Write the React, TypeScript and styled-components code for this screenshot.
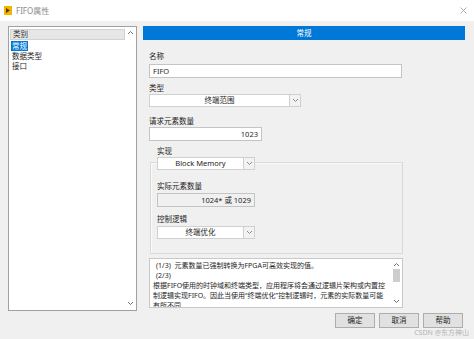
import React from 'react';
import styled, { createGlobalStyle } from 'styled-components';

const GlobalStyle = createGlobalStyle`
  html, body {
    margin: 0;
    padding: 0;
    background: #f0f0f0;
  }
`;

const Window = styled.div`
  position: relative;
  width: 474px;
  height: 339px;
  display: flex;
  flex-direction: column;
  overflow: hidden;
  background: #f0f0f0;
  color: #1e1e1e;
  font-family: 'Noto Sans', 'Noto Sans CJK SC', sans-serif;
  font-size: 7.5px;
`;

const TitleBar = styled.header`
  flex: none;
  height: 21px;
  display: flex;
  align-items: center;
  gap: 4px;
  padding: 0 7px 0 4px;
  background: #fff;
  box-sizing: border-box;
`;

const Title = styled.span`
  color: #8c8c8c;
  font-size: 8px;
  line-height: 10px;
`;

const CloseGlyph = styled.svg`
  margin-left: auto;
`;

const Body = styled.div`
  display: flex;
  gap: 6px;
  padding: 5px 8px 0;
`;

const CategoryList = styled.div`
  width: 129px;
  height: 285px;
  display: flex;
  box-sizing: border-box;
  background: #fff;
  border: 1px solid #a0a0a0;
`;

const ListItems = styled.div`
  flex: 1;
  display: flex;
  flex-direction: column;
  padding: 2px 0 0 1px;
`;

const ListHeader = styled.div`
  height: 9px;
  line-height: 9px;
  padding-left: 2px;
  margin-bottom: 1px;
  background: #e6e6e6;
  border: 1px solid #d2d2d2;
  color: #333;
`;

const ListItem = styled.div<{ $selected?: boolean }>`
  height: 10px;
  line-height: 10px;
  padding-left: 1px;

  span {
    padding: 0 1px;
    background: ${({ $selected }) => ($selected ? '#0078d7' : 'transparent')};
    color: ${({ $selected }) => ($selected ? '#fff' : '#1e1e1e')};
  }
`;

const ScrollTrack = styled.div<{ $bottom: number }>`
  width: 11px;
  display: flex;
  flex-direction: column;
  align-items: center;
  justify-content: space-between;
  padding: 3px 0 ${({ $bottom }) => $bottom}px;
`;

const ScrollThumb = styled.div`
  width: 7px;
  height: 13px;
  margin: 2px 0 auto;
  background: #cdcdcd;
`;

const MainPane = styled.div`
  width: 323px;
  display: flex;
  flex-direction: column;
`;

const SectionHeader = styled.div`
  height: 14px;
  margin-right: 1px;
  line-height: 14px;
  text-align: center;
  background: #0078d7;
  color: #fff;
`;

const Form = styled.div`
  display: flex;
  flex-direction: column;
  padding-left: 6px;
`;

const FieldLabel = styled.div<{ $gap: number }>`
  height: 9px;
  line-height: 9px;
  margin-top: ${({ $gap }) => $gap}px;
`;

const TextBox = styled.div<{ $width: number; $gap: number; $right?: boolean; $readOnly?: boolean }>`
  width: ${({ $width }) => $width}px;
  height: 14px;
  margin-top: ${({ $gap }) => $gap}px;
  padding: 0 3px;
  box-sizing: border-box;
  line-height: 12px;
  text-align: ${({ $right }) => ($right ? 'right' : 'left')};
  background: ${({ $readOnly }) => ($readOnly ? '#f0f0f0' : '#fff')};
  border: 1px solid #c4c4c4;
`;

const Combo = styled.div<{ $width: number; $gap: number }>`
  width: ${({ $width }) => $width}px;
  height: 13px;
  margin-top: ${({ $gap }) => $gap}px;
  display: flex;
  box-sizing: border-box;
  background: #fff;
  border: 1px solid #d0d0d0;
`;

const ComboText = styled.div`
  flex: 1;
  line-height: 11px;
  text-align: center;
`;

const ComboArrow = styled.div`
  width: 10px;
  display: flex;
  align-items: center;
  justify-content: center;
  background: #f2f2f2;
  border-left: 1px solid #cfcfcf;
`;

const Group = styled.div`
  display: flex;
  flex-direction: column;
  padding-left: 1px;
`;

const GroupHead = styled.div`
  position: relative;
  z-index: 1;
  display: flex;
  flex-direction: column;
  padding-left: 7px;
`;

const Frame = styled.div`
  width: 253px;
  height: 92px;
  margin-top: -8px;
  display: flex;
  flex-direction: column;
  padding-left: 6px;
  box-sizing: border-box;
  border: 1px solid #d9d9d9;
  box-shadow: inset 1px 1px 0 #fafafa;
`;

const MessageBox = styled.div`
  width: 254px;
  height: 50px;
  margin-top: 4px;
  display: flex;
  box-sizing: border-box;
  background: #fff;
  border: 1px solid #c8c8c8;
`;

const MessageText = styled.div`
  flex: 1;
  overflow: hidden;
  padding: 2px 0 0 3px;
  font-size: 7px;
`;

const MessageLine = styled.div<{ $indent?: number }>`
  height: 10px;
  line-height: 10px;
  white-space: nowrap;
  padding-left: ${({ $indent }) => $indent ?? 0}px;
`;

const Footer = styled.div`
  display: flex;
  justify-content: flex-end;
  gap: 4px;
  padding: 2px 11px 0 0;
`;

const Button = styled.button`
  width: 40px;
  height: 15px;
  padding: 0;
  background: #e1e1e1;
  border: 1px solid #adadad;
  color: #1e1e1e;
  font-family: inherit;
  font-size: 7.5px;
  line-height: 13px;
`;

const Watermark = styled.div`
  position: absolute;
  right: 5px;
  bottom: 2px;
  color: #b4b4b4;
  font-size: 7px;
  line-height: 8px;
`;

function Chevron({ up = false, color = '#6e6e6e' }: { up?: boolean; color?: string }) {
  return (
    <svg width="7" height="5" viewBox="0 0 7 5">
      <polyline
        points={up ? '1,4 3.5,1.5 6,4' : '1,1 3.5,3.5 6,1'}
        fill="none"
        stroke={color}
        strokeWidth="1"
      />
    </svg>
  );
}

function ComboBox({ value, width, gap }: { value: string; width: number; gap: number }) {
  return (
    <Combo $width={width} $gap={gap}>
      <ComboText>{value}</ComboText>
      <ComboArrow>
        <Chevron color="#8a8a8a" />
      </ComboArrow>
    </Combo>
  );
}

export default function App() {
  return (
    <>
      <GlobalStyle />
      <Window>
        <TitleBar>
          <svg width="8" height="9" viewBox="0 0 8 9">
            <rect x="0" y="0" width="8" height="9" fill="#f2b600" />
            <path d="M2 2 L6 4.5 L2 7 Z" fill="#5a3c00" />
          </svg>
          <Title>FIFO属性</Title>
          <CloseGlyph width="7" height="7" viewBox="0 0 7 7">
            <path d="M0.5 0.5 L6.5 6.5 M6.5 0.5 L0.5 6.5" stroke="#9a9a9a" strokeWidth="0.8" />
          </CloseGlyph>
        </TitleBar>

        <Body>
          <CategoryList>
            <ListItems>
              <ListHeader>类别</ListHeader>
              <ListItem $selected>
                <span>常规</span>
              </ListItem>
              <ListItem>
                <span>数据类型</span>
              </ListItem>
              <ListItem>
                <span>接口</span>
              </ListItem>
            </ListItems>
            <ScrollTrack $bottom={4}>
              <Chevron up />
              <Chevron />
            </ScrollTrack>
          </CategoryList>

          <MainPane>
            <SectionHeader>常规</SectionHeader>
            <Form>
              <FieldLabel $gap={12}>名称</FieldLabel>
              <TextBox $width={253} $gap={3}>FIFO</TextBox>
              <FieldLabel $gap={6}>类型</FieldLabel>
              <ComboBox value="终端范围" width={152} gap={1} />
              <FieldLabel $gap={10}>请求元素数量</FieldLabel>
              <TextBox $width={113} $gap={1} $right>
                1023
              </TextBox>

              <Group>
                <GroupHead>
                  <FieldLabel $gap={6}>实现</FieldLabel>
                  <ComboBox value="Block Memory" width={98} gap={1} />
                </GroupHead>
                <Frame>
                  <FieldLabel $gap={19}>实际元素数量</FieldLabel>
                  <TextBox $width={98} $gap={2} $right $readOnly>
                    1024* 或 1029
                  </TextBox>
                  <FieldLabel $gap={8}>控制逻辑</FieldLabel>
                  <ComboBox value="终端优化" width={98} gap={2} />
                </Frame>
              </Group>

              <MessageBox>
                <MessageText>
                  <MessageLine $indent={3}>(1/3)&nbsp;&nbsp;元素数量已强制转换为FPGA可高效实现的值。</MessageLine>
                  <MessageLine $indent={3}>(2/3)</MessageLine>
                  <MessageLine>根据FIFO使用的时钟域和终端类型，应用程序将会通过逻辑片架构或内置控</MessageLine>
                  <MessageLine>制逻辑实现FIFO。因此当使用“终端优化”控制逻辑时，元素的实际数量可能</MessageLine>
                  <MessageLine>有所不同</MessageLine>
                </MessageText>
                <ScrollTrack $bottom={3}>
                  <Chevron up />
                  <ScrollThumb />
                  <Chevron />
                </ScrollTrack>
              </MessageBox>
            </Form>
          </MainPane>
        </Body>

        <Footer>
          <Button>确定</Button>
          <Button>取消</Button>
          <Button>帮助</Button>
        </Footer>

        <Watermark>CSDN @东方神山</Watermark>
      </Window>
    </>
  );
}
